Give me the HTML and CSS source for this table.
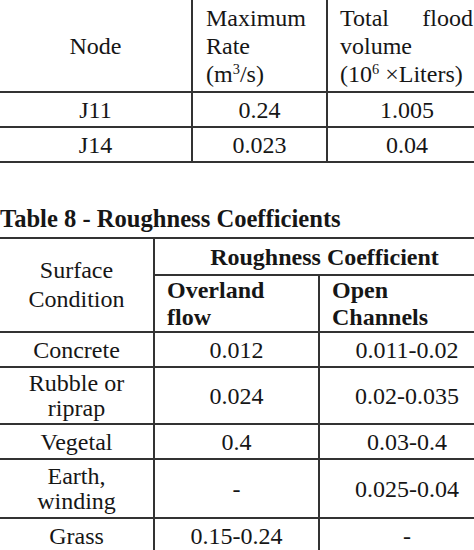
FILE: index.html
```html
<!DOCTYPE html>
<html>
<head>
<meta charset="utf-8">
<link rel="stylesheet" href="styles.css">
</head>
<body>
<div class="page">
  <div class="t1">
    <div class="cell hd center"><div>Node</div></div>
    <div class="cell hd left vl"><div>Maximum<br>Rate<br>(m<sup class="sup">3</sup>/s)</div></div>
    <div class="cell hd just vl"><div class="jtxt">Total flood volume<br>(10<sup class="sup">6</sup>&nbsp;×Liters)</div></div>
    <div class="cell center ht"><div>J11</div></div>
    <div class="cell center ht vl"><div>0.24</div></div>
    <div class="cell center ht vl"><div>1.005</div></div>
    <div class="cell center ht"><div>J14</div></div>
    <div class="cell center ht vl"><div>0.023</div></div>
    <div class="cell center ht vl"><div>0.04</div></div>
  </div>
  <div class="title">Table 8 - Roughness Coefficients</div>
  <div class="t2">
    <div class="cell hd2 center surf"><div>Surface<br>Condition</div></div>
    <div class="cell bold center rc vl"><div>Roughness Coefficient</div></div>
    <div class="cell hd2 bold left vl ht"><div>Overland<br>flow</div></div>
    <div class="cell hd2 bold left vl ht"><div>Open<br>Channels</div></div>

    <div class="cell center ht"><div>Concrete</div></div>
    <div class="cell center ht vl"><div>0.012</div></div>
    <div class="cell center ht vl"><div>0.011-0.02</div></div>

    <div class="cell two center ht"><div>Rubble or<br>riprap</div></div>
    <div class="cell center ht vl"><div>0.024</div></div>
    <div class="cell center ht vl"><div>0.02-0.035</div></div>

    <div class="cell center ht"><div>Vegetal</div></div>
    <div class="cell center ht vl"><div>0.4</div></div>
    <div class="cell center ht vl"><div>0.03-0.4</div></div>

    <div class="cell two center ht"><div>Earth,<br>winding</div></div>
    <div class="cell center ht vl"><div>-</div></div>
    <div class="cell center ht vl"><div>0.025-0.04</div></div>

    <div class="cell center ht"><div>Grass</div></div>
    <div class="cell center ht vl"><div>0.15-0.24</div></div>
    <div class="cell center ht vl"><div>-</div></div>
  </div>
</div>
</body>
</html>
```
FILE: styles.css
```css
* {
  box-sizing: border-box;
}
html, body {
  margin: 0;
  padding: 0;
  background: #ffffff;
  overflow: hidden;
}
body {
  width: 474px;
  height: 550px;
}
.page {
  font-family: "Liberation Serif", "Times New Roman", serif;
  font-size: 24px;
  color: #161616;
  width: 474px;
  height: 550px;
  overflow: hidden;
}
.t1 {
  display: grid;
  grid-template-columns: 191px 135px 160px;
  grid-template-rows: 91px 35px 35px;
  border-bottom: 2px solid #333333;
  width: 486px;
}
.t2 {
  display: grid;
  grid-template-columns: 153px 165px 176px;
  grid-template-rows: 35px 57px 35px 57px 35px 59px 35px;
  border-top: 2px solid #333333;
  width: 494px;
}
.cell {
  display: flex;
  align-items: center;
  line-height: 28px;
}
.center {
  justify-content: center;
  text-align: center;
}
.left {
  justify-content: flex-start;
  text-align: left;
}
.hd {
  padding: 4px 13px 3px 13px;
  line-height: 28px;
}
.hd2 {
  line-height: 27px;
}
.left.hd2 {
  padding: 0 12px;
}
.just {
  padding: 4px 13px 3px 12px;
}
.jtxt {
  width: 100%;
  text-align: justify;
}
.vl {
  border-left: 2px solid #333333;
}
.ht {
  border-top: 2px solid #333333;
}
.two {
  line-height: 25px;
}
.bold {
  font-weight: bold;
}
.surf {
  grid-row: 1 / 3;
  grid-column: 1;
  line-height: 29px;
}
.rc {
  grid-row: 1;
  grid-column: 2 / 4;
}
.sup {
  font-size: 0.6em;
  line-height: 0;
  vertical-align: 0.55em;
}
.title {
  font-weight: bold;
  font-size: 24.6px;
  line-height: 28px;
  margin-top: 42px;
  margin-bottom: 4px;
  white-space: nowrap;
}
```
